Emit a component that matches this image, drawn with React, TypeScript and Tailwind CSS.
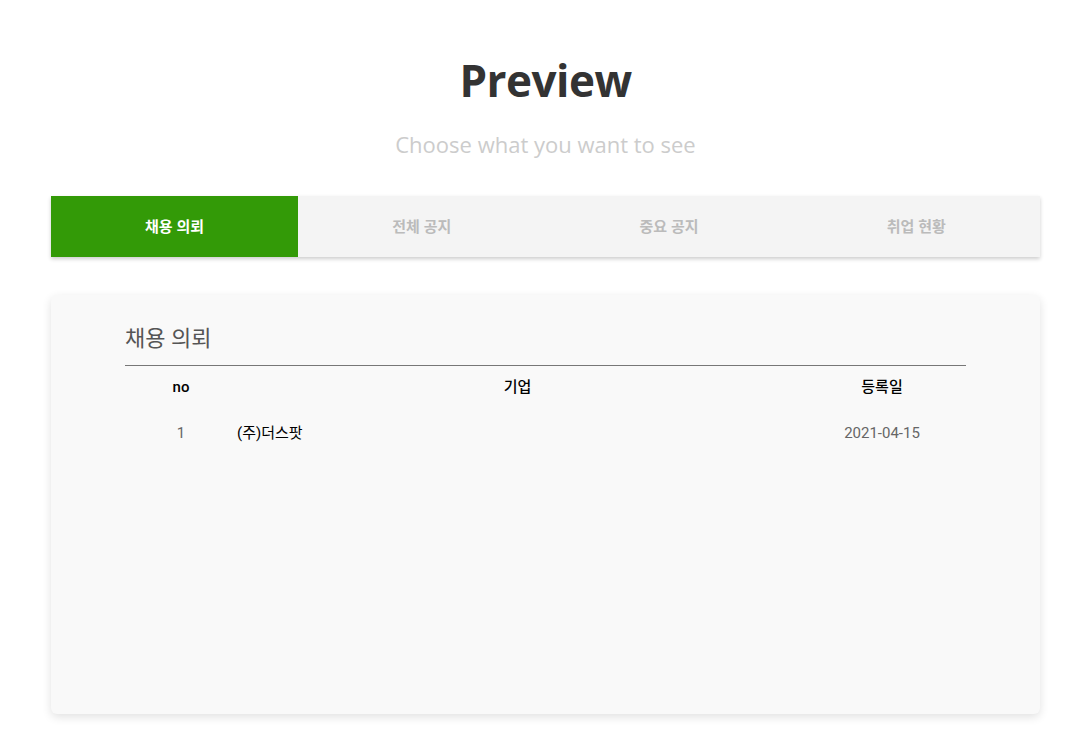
import React, { useState } from 'react';

const tabs = ['채용 의뢰', '전체 공지', '중요 공지', '취업 현황'];

const rows = [{ no: 1, company: '(주)더스팟', date: '2021-04-15' }];

export default function App() {
  const [active, setActive] = useState(0);

  return (
    <div className="min-h-screen bg-white font-['Open_Sans','Noto_Sans_CJK_KR',sans-serif]">
      <div className="ml-[51px] w-[989px] pt-[50px] pb-[30px]">
        <h1 className="text-center text-[44px] font-bold leading-[60px] tracking-[-0.5px] text-[#333]">Preview</h1>
        <p className="mt-[19px] text-center text-[22px] leading-[30px] text-[#ccc]">Choose what you want to see</p>

        {/* Tabs */}
        <div className="mt-[37px] grid h-[61px] grid-cols-4 bg-[#f4f4f4] shadow-[0_2px_4px_rgba(0,0,0,0.2)]">
          {tabs.map((t, i) => (
            <button
              key={t}
              onClick={() => setActive(i)}
              className={`flex items-center justify-center text-[15px] font-bold ${
                active === i ? 'bg-[#339a07] text-white' : 'text-[#bbb]'
              }`}
            >
              {t}
            </button>
          ))}
        </div>

        {/* Content card */}
        <div className="mt-[38px] h-[419px] rounded-[6px] bg-[#f9f9f9] px-[74px] pt-[28px] shadow-[0_3px_10px_rgba(0,0,0,0.12)] font-['Roboto','Noto_Sans_CJK_KR',sans-serif]">
          <h2 className="pb-[10px] text-[22px] leading-[32px] text-[#555]">{tabs[active]}</h2>
          <table className="w-full border-t border-[#777] text-[15px]">
            <thead>
              <tr className="h-[42px] text-black font-medium">
                <th className="w-[112px] font-medium">no</th>
                <th className="font-medium">기업</th>
                <th className="w-[168px] font-medium">등록일</th>
              </tr>
            </thead>
            <tbody>
              {rows.map((r) => (
                <tr key={r.no} className="h-[52px]">
                  <td className="text-center text-[#666]">{r.no}</td>
                  <td className="text-left text-black">{r.company}</td>
                  <td className="text-center text-[#666]">{r.date}</td>
                </tr>
              ))}
            </tbody>
          </table>
        </div>
      </div>
    </div>
  );
}
